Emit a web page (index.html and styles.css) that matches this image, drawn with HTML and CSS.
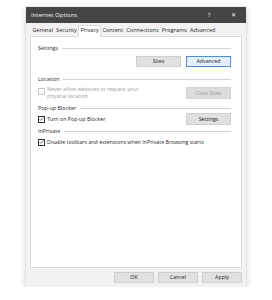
FILE: index.html
```html
<!DOCTYPE html>
<html>
<head>
<meta charset="utf-8">
<link rel="stylesheet" href="styles.css">
</head>
<body>
<div class="window">
  <div class="titlebar">
    <span class="title">Internet Options</span>
    <span class="help">?</span>
    <span class="close">✕</span>
  </div>
  <div class="tabs">
    <span class="tab">General</span>
    <span class="tab">Security</span>
    <span class="tab active">Privacy</span>
    <span class="tab">Content</span>
    <span class="tab">Connections</span>
    <span class="tab">Programs</span>
    <span class="tab">Advanced</span>
  </div>
  <div class="panel">
    <div class="group-label"><span>Settings</span><i class="rule"></i></div>
    <div class="btn-row">
      <button class="btn">Sites</button>
      <button class="btn default">Advanced</button>
    </div>

    <div class="group-label g-location"><span>Location</span><i class="rule"></i></div>
    <div class="opt-row loc-row">
      <label class="check disabled">
        <span class="box"></span>
        <span class="lbl">Never allow websites to request your<br>physical location</span>
      </label>
      <button class="btn disabled-btn">Clear Sites</button>
    </div>

    <div class="group-label g-popup"><span>Pop-up Blocker</span><i class="rule"></i></div>
    <div class="opt-row popup-row">
      <label class="check">
        <span class="box"><svg viewBox="0 0 8 8" width="6" height="6"><path d="M1 4.2 L3 6.2 L7 1.5" fill="none" stroke="#222" stroke-width="1"/></svg></span>
        <span class="lbl">Turn on Pop-up Blocker</span>
      </label>
      <button class="btn">Settings</button>
    </div>

    <div class="group-label g-inprivate"><span>InPrivate</span><i class="rule"></i></div>
    <div class="opt-row inp-row">
      <label class="check">
        <span class="box"><svg viewBox="0 0 8 8" width="6" height="6"><path d="M1 4.2 L3 6.2 L7 1.5" fill="none" stroke="#222" stroke-width="1"/></svg></span>
        <span class="lbl">Disable toolbars and extensions when InPrivate Browsing starts</span>
      </label>
    </div>
  </div>
  <div class="footer">
    <button class="btn fbtn">OK</button>
    <button class="btn fbtn">Cancel</button>
    <button class="btn fbtn">Apply</button>
  </div>
</div>
</body>
</html>
```
FILE: styles.css
```css
* { box-sizing: border-box; }
html, body { margin: 0; padding: 0; background: #fff; }
body {
  font-family: "Open Sans", "Noto Sans", sans-serif;
  font-size: 5.3px;
  color: #262626;
}
.window {
  margin: 7px 0 0 26px;
  width: 220px;
  height: 280px;
  background: #f2f2f2;
  box-shadow: 0 2px 8px rgba(0,0,0,0.18), 0 0 1px rgba(0,0,0,0.2);
  display: flex;
  flex-direction: column;
}
.titlebar {
  height: 16px;
  background: #454545;
  color: #f4f4f4;
  display: flex;
  align-items: center;
  padding: 0 0 0 5px;
  font-size: 6px;
}
.title { flex: 1; }
.help { width: 10px; text-align: center; margin-right: 14px; }
.close { width: 10px; text-align: center; margin-right: 8px; }
.tabs {
  height: 13px;
  display: flex;
  align-items: flex-end;
  padding-left: 5px;
  font-size: 5.6px;
}
.tab {
  padding: 0 1.5px 2px;
  height: 10px;
  display: flex;
  align-items: center;
}
.tab.active {
  background: #fff;
  border: 1px solid #dadada;
  border-bottom: none;
  height: 12px;
  padding: 0 1px 4px;
  margin-bottom: -1px;
  position: relative;
  z-index: 1;
}
.panel {
  margin: 0 4px;
  height: 232px;
  background: #fff;
  border: 1px solid #dadada;
  padding: 7px 10px 0 7px;
  display: flex;
  flex-direction: column;
}
.group-label {
  display: flex;
  align-items: center;
  height: 8px;
  gap: 4px;
  color: #1f1f1f;
  font-size: 5.4px;
}
.rule { flex: 1; height: 1px; background: #d4d4d4; display: block; }
.btn {
  font-family: inherit;
  font-size: 5.3px;
  color: #222;
  background: #e1e1e1;
  border: 1px solid #cfcfcf;
  height: 11px;
  padding: 0;
  margin: 0;
  line-height: 9px;
}
.btn-row {
  display: flex;
  justify-content: flex-end;
  gap: 5px;
  margin-top: 4px;
}
.btn-row .btn { width: 45px; }
.btn.default { border-color: #4a8fd8; background: #e5f0fb; }
.g-location { margin-top: 8px; }
.opt-row {
  display: flex;
  align-items: center;
  justify-content: space-between;
}
.loc-row { margin-top: 3px; }
.disabled-btn { width: 45px; height: 12px; color: #9a9a9a; background: #dcdcdc; border-color: #d4d4d4; }
.check { display: flex; align-items: center; gap: 2px; }
.box {
  width: 7px; height: 7px;
  border: 1px solid #333;
  display: flex; align-items: center; justify-content: center;
  background: #fff;
  flex: none;
}
.check.disabled { color: #9c9c9c; align-items: flex-start; }
.check.disabled .box { border-color: #c6c6c6; margin-top: 2px; }
.check.disabled .lbl { line-height: 7px; }
.g-popup { margin-top: 4px; }
.popup-row { margin-top: 1px; }
.popup-row .btn { width: 45px; height: 12px; }
.g-inprivate { margin-top: 2px; }
.inp-row { margin-top: 3px; }
.footer {
  flex: 1;
  display: flex;
  justify-content: flex-end;
  align-items: flex-start;
  gap: 4px;
  padding: 4px 4px 0 0;
}
.fbtn { width: 40px; height: 11px; }
```
